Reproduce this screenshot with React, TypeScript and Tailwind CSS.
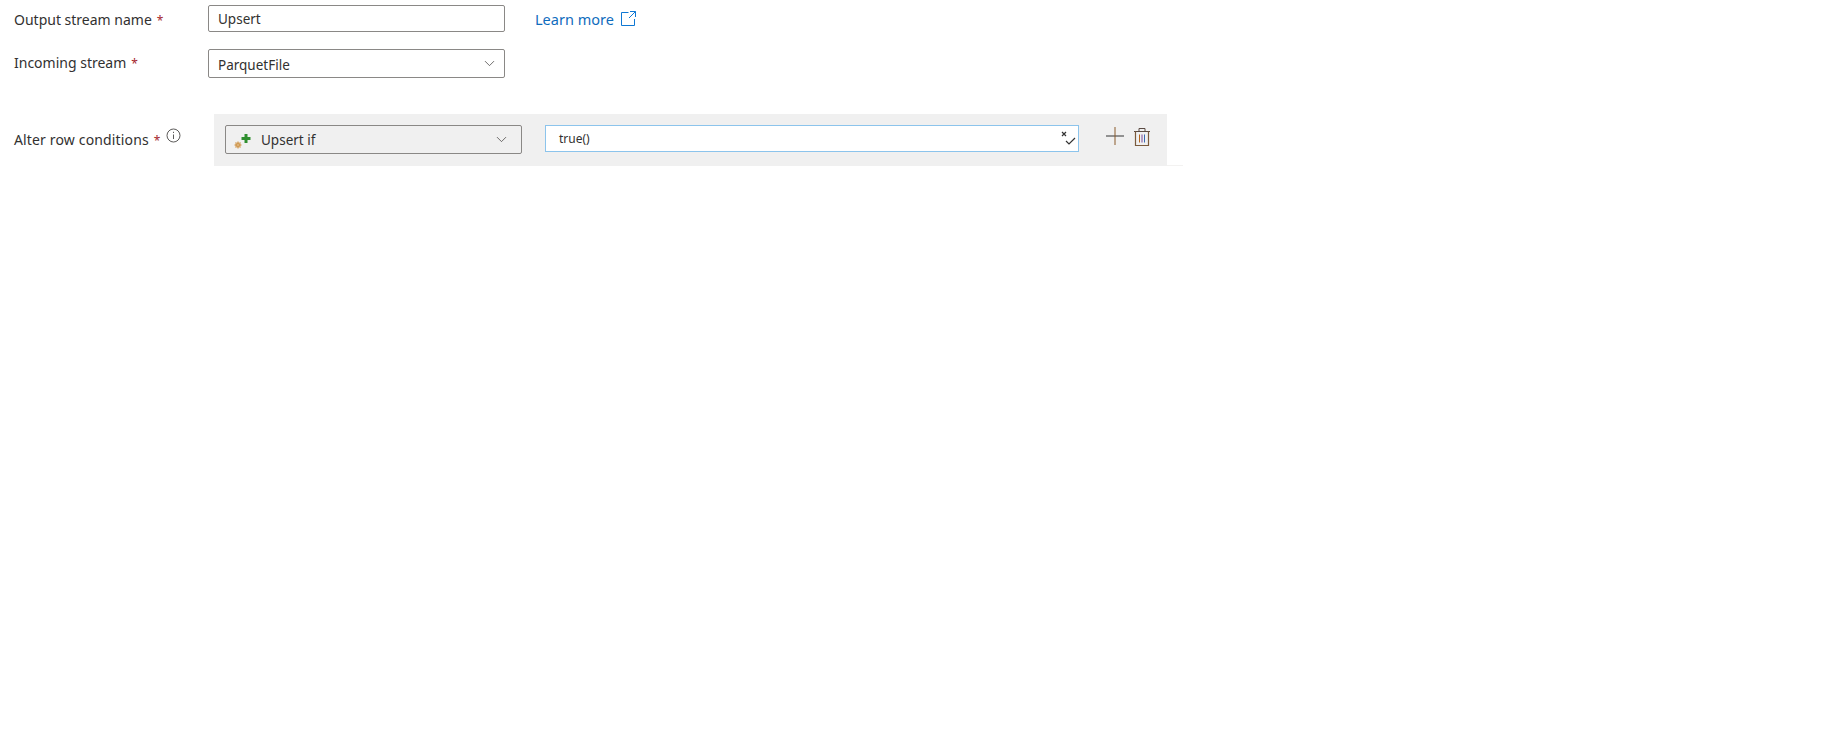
import { ChevronDown } from "lucide-react";

function Label({ text, wide }: { text: string; wide?: boolean }) {
  return (
    <span className={wide ? "text-[14px] leading-[20px] tracking-[0.15px] text-[#323130] whitespace-nowrap" : "text-[14px] leading-[20px] text-[#323130] whitespace-nowrap"}>
      {text}
      <span className="ml-[5px] text-[12px] text-[#a4262c]">*</span>
    </span>
  );
}

function UpsertIcon() {
  return (
    <svg width="20" height="20" viewBox="0 0 20 20">
      <path d="M11.5 3h3v3h3v3h-3v3h-3V9h-3V6h3z" fill="#2f8f2f" transform="translate(0 1)" />
      <circle cx="5" cy="15" r="2.8" fill="#c98a3c" />
      <path d="M5 11v8M1 15h8M2.2 12.2l5.6 5.6M7.8 12.2l-5.6 5.6" stroke="#dcb27a" strokeWidth="0.8" />
    </svg>
  );
}

export default function App() {
  return (
    <div className="min-h-screen bg-white font-['Noto_Sans','Open_Sans',sans-serif] text-[#323130]">
      <div className="flex items-center pt-[5px] pl-[14px]">
        <div className="w-[194px]">
          <Label text="Output stream name" />
        </div>
        <div className="w-[297px] h-[27px] flex items-center px-[9px] pt-[1px] border border-[#8a8886] rounded-[2px] text-[13.5px]">
          Upsert
        </div>
        <a className="ml-[30px] flex items-center gap-[6px] pt-[2px] text-[14.5px] text-[#0f6cbd]">
          Learn more
          <svg width="17" height="17" viewBox="0 0 17 17" fill="none" stroke="#0f78d4" strokeWidth="1" className="-mt-[3px]">
            <path d="M8.5 2.5H1.5v13h13V9M10 1.5h5.5V7M15.5 1.5L9 8" />
          </svg>
        </a>
      </div>

      <div className="flex items-center mt-[17px] pl-[14px]">
        <div className="w-[194px] -mt-[3px]">
          <Label text="Incoming stream" />
        </div>
        <div className="w-[297px] h-[29px] flex items-center justify-between pl-[9px] pr-[6px] pt-[3px] border border-[#8a8886] rounded-[2px] text-[13.5px]">
          ParquetFile
          <ChevronDown size={17} strokeWidth={1.1} className="text-[#484644] -mt-[4px]" />
        </div>
      </div>

      <div className="flex mt-[36px] pl-[14px]">
        <div className="w-[200px] flex items-start pt-[16px]">
          <Label text="Alter row conditions" wide />
          <svg width="15" height="15" viewBox="0 0 15 15" fill="none" stroke="#323130" strokeWidth="0.8" className="ml-[5px] -mt-[2px]">
            <circle cx="7.5" cy="7.5" r="6.5" />
            <path d="M7.5 6.5v4.5M7.5 3.8v1.2" />
          </svg>
        </div>
        <div className="border-b border-[#f3f2f1] w-[969px] h-[52px]">
          <div className="w-[953px] h-[52px] bg-[#f0f0f0] flex items-start pt-[11px] pl-[11px]">
            <div className="w-[297px] h-[29px] flex items-center border border-[#8a8886] rounded-[2px] text-[13.5px] pl-[7px] pr-[11px]">
              <UpsertIcon />
              <span className="ml-[8px] pt-[1px] flex-1">Upsert if</span>
              <ChevronDown size={17} strokeWidth={1.1} className="text-[#484644]" />
            </div>
            <div className="ml-[23px] w-[534px] h-[27px] flex items-center justify-between bg-white border border-[#8cc4ec] text-[12px] pl-[13px] pr-[1px]">
              true()
              <svg width="18" height="18" viewBox="0 0 18 18" fill="none" stroke="#333" strokeWidth="1.2">
                <path d="M3 2l4 4M7 2l-4 4" />
                <path d="M7 11l3 3 6-6" />
              </svg>
            </div>
            <svg width="18" height="18" viewBox="0 0 18 18" fill="none" className="ml-[27px] mt-[2px]">
              <path d="M0 9h18" stroke="#333" />
              <path d="M9 0v18" stroke="#8a5a2b" />
            </svg>
            <svg width="18" height="20" viewBox="0 0 18 20" fill="none" className="ml-[9px] mt-[2px]">
              <path d="M1 4.5h16M6 4.5V1.5h6v3" stroke="#5a4a42" />
              <path d="M2.5 4.5v14h13v-14" stroke="#7a5a3c" strokeWidth="1.2" />
              <path d="M6.5 7.5v8" stroke="#b5651d" />
              <path d="M9 7.5v8" stroke="#7a4a9c" />
              <path d="M11.5 7.5v8" stroke="#3a6ab0" />
            </svg>
          </div>
        </div>
      </div>
    </div>
  );
}
